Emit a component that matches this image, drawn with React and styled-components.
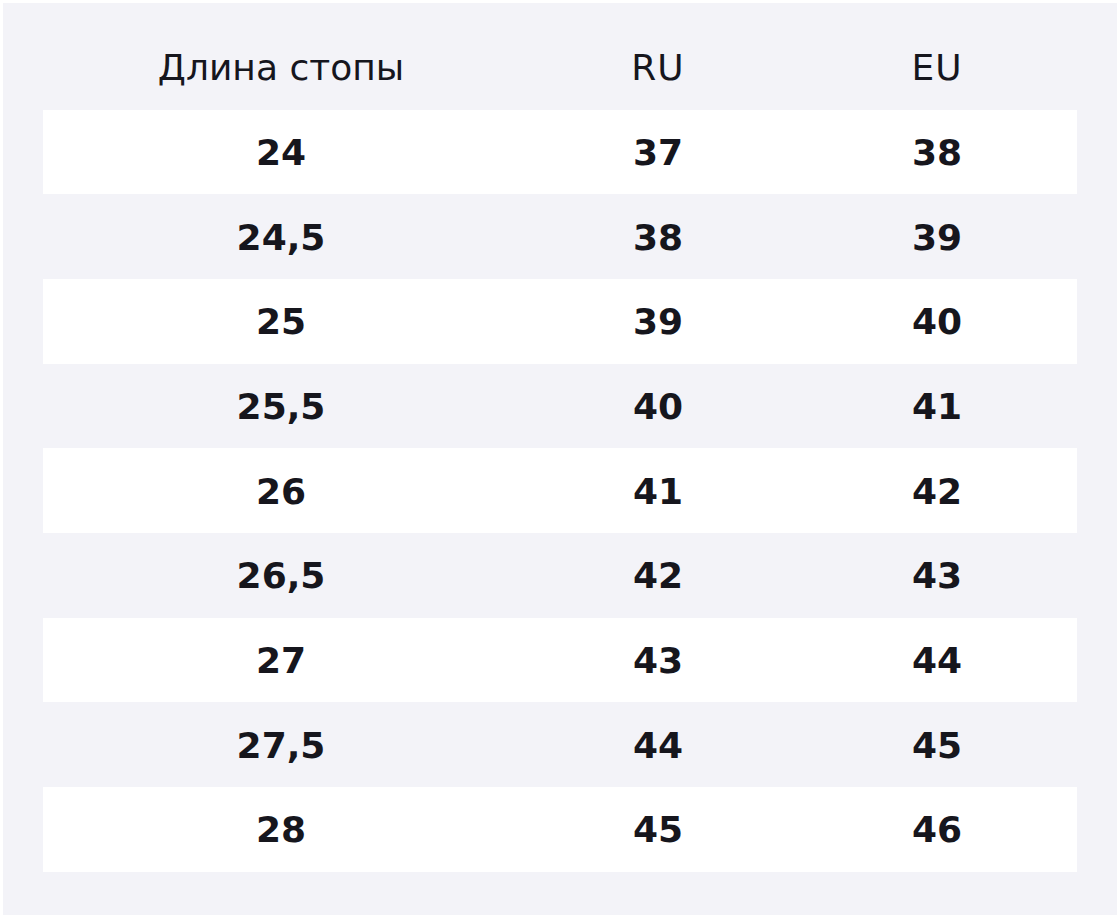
import React from "react";
import styled, { createGlobalStyle } from "styled-components";

const GlobalStyle = createGlobalStyle`
  body {
    margin: 0;
    background: #ffffff;
    font-family: "DejaVu Sans", "Noto Sans", sans-serif;
  }
`;

const sizes = [
  ["24", "37", "38"],
  ["24,5", "38", "39"],
  ["25", "39", "40"],
  ["25,5", "40", "41"],
  ["26", "41", "42"],
  ["26,5", "42", "43"],
  ["27", "43", "44"],
  ["27,5", "44", "45"],
  ["28", "45", "46"],
];

const App = () => {
  return (
    <Page>
      <GlobalStyle />
      <Panel>
        <Row>
          <Cell>Длина стопы</Cell>
          <Cell $spaced>RU</Cell>
          <Cell $spaced>EU</Cell>
        </Row>
        {sizes.map((row, i) => (
          <Row key={row[0]} $striped={i % 2 === 0} $bold>
            {row.map((v, j) => (
              <Cell key={j}>{v}</Cell>
            ))}
          </Row>
        ))}
      </Panel>
    </Page>
  );
};

const Page = styled.div`
  padding: 3px;
  width: 1114px;
`;
const Panel = styled.div`
  background: #f3f3f8;
  padding: 22px 40px 43px;
  display: flex;
  flex-direction: column;
`;
const Row = styled.div`
  display: grid;
  grid-template-columns: 476px 278px 280px;
  height: 84.67px;
  align-items: center;
  background: ${(props) => (props.$striped ? "#ffffff" : "transparent")};
  font-weight: ${(props) => (props.$bold ? 700 : 400)};
  color: #16161d;
  font-size: 36px;
`;
const Cell = styled.div`
  text-align: center;
  line-height: 1;
  padding-top: 2px;
  letter-spacing: ${(props) => (props.$spaced ? "1px" : "0")};
`;

export default App;
